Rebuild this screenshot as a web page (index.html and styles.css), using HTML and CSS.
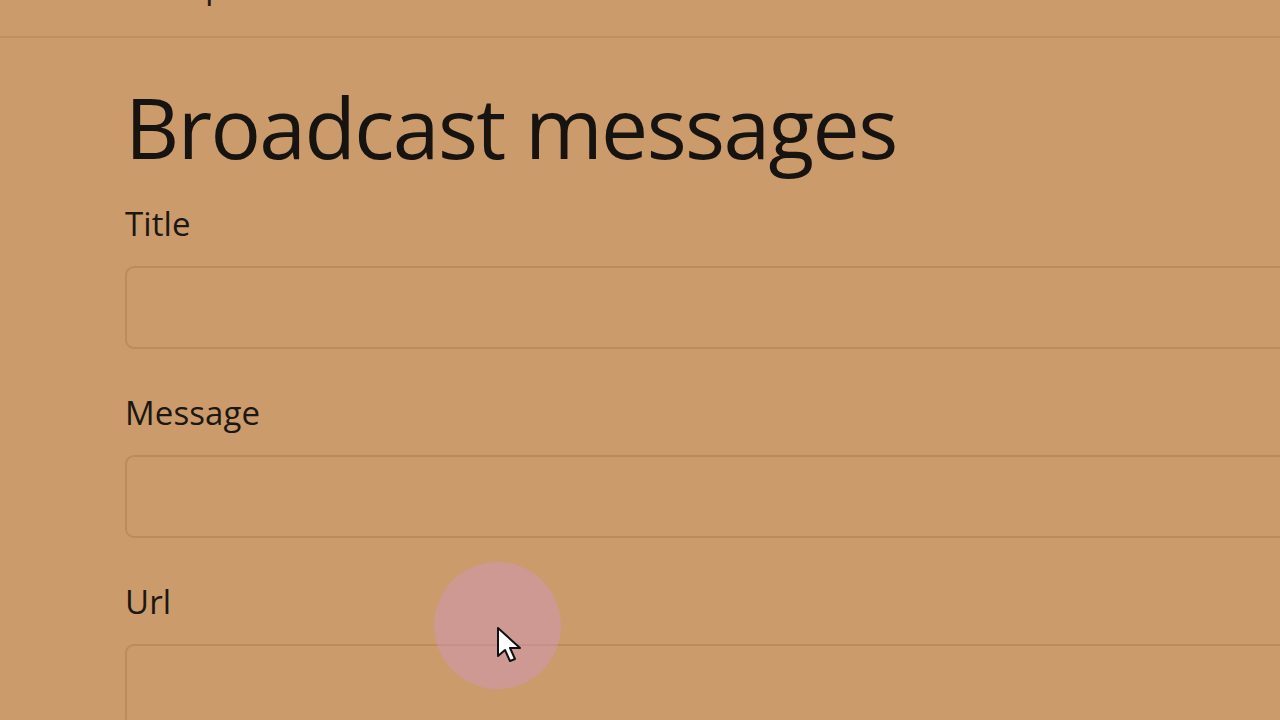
FILE: index.html
```html
<!DOCTYPE html>
<html lang="en">
<head>
<meta charset="utf-8">
<title>Broadcast messages</title>
<link rel="stylesheet" href="styles.css">
</head>
<body>
<header class="topbar">
  <span class="topbar-text">Group</span>
</header>
<main class="container">
  <h1 class="page-title">Broadcast messages</h1>
  <form class="form">
    <div class="field">
      <label class="field-label" for="title">Title</label>
      <input class="field-input" id="title" type="text">
    </div>
    <div class="field">
      <label class="field-label" for="message">Message</label>
      <input class="field-input" id="message" type="text">
    </div>
    <div class="field">
      <label class="field-label" for="url">Url</label>
      <input class="field-input" id="url" type="text">
    </div>
  </form>
</main>
<div class="cursor-halo"></div>
<svg class="cursor-arrow" width="28" height="40" viewBox="0 0 28 40">
  <path d="M2 2 L2 30 L9 24 L14 35 L19 33 L14 22 L24 22 Z" fill="#ffffff" stroke="#111111" stroke-width="2" stroke-linejoin="round"/>
</svg>
</body>
</html>
```

FILE: styles.css
```css
html, body {
  margin: 0;
  padding: 0;
  height: 100%;
  overflow: hidden;
}
body {
  background: #cc9b6b;
  font-family: "Open Sans", "Noto Sans", sans-serif;
  color: #1b1712;
}
.topbar {
  height: 36px;
  border-bottom: 2px solid #bf8f61;
  overflow: hidden;
  display: flex;
  align-items: flex-end;
  padding-left: 125px;
}
.topbar-text {
  font-size: 34px;
  line-height: 1;
  margin-bottom: 34px;
  color: #2a1a10;
}
.container {
  padding-left: 125px;
}
.page-title {
  margin: 0;
  font-weight: 400;
  font-size: 84px;
  line-height: 1;
  padding-top: 47px;
  letter-spacing: -1.6px;
  color: #161310;
}
.form {
  display: flex;
  flex-direction: column;
  gap: 44px;
  margin-top: 35px;
}
.field {
  display: flex;
  flex-direction: column;
}
.field-label {
  font-size: 33px;
  line-height: 39px;
  margin-bottom: 23px;
  color: #1b1712;
  letter-spacing: 0.1px;
}
.field-input {
  box-sizing: border-box;
  height: 83px;
  width: calc(100% + 40px);
  background: transparent;
  border: 2px solid #bc8b5d;
  border-radius: 9px;
  font: inherit;
}
.cursor-halo {
  position: absolute;
  left: 434px;
  top: 562px;
  width: 127px;
  height: 127px;
  border-radius: 50%;
  background: rgba(210, 150, 200, 0.42);
}
.cursor-arrow {
  position: absolute;
  left: 496px;
  top: 626px;
}
```
